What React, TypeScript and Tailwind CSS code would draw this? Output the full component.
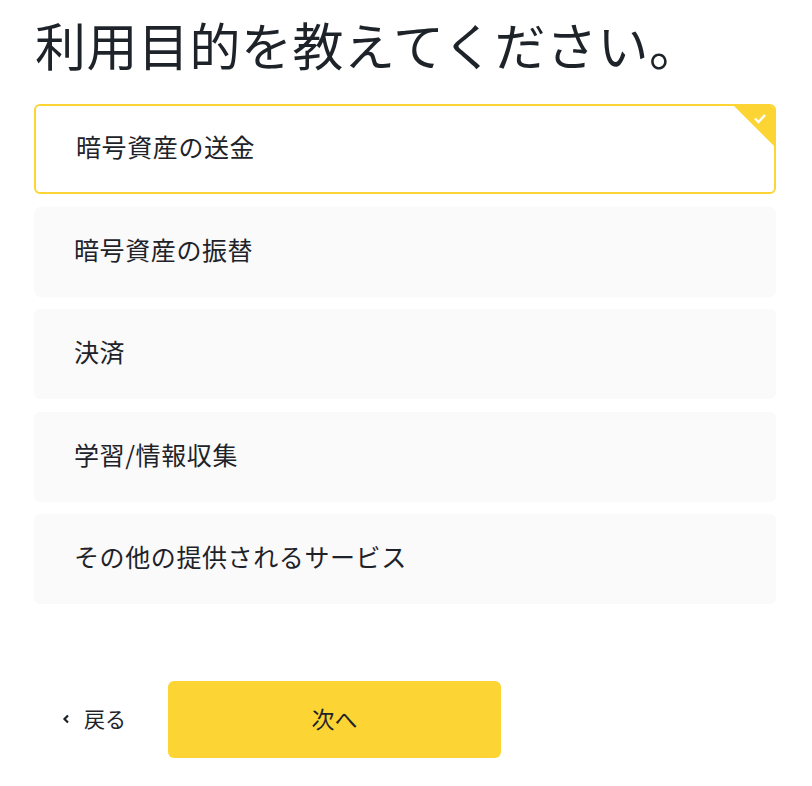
import { useState } from "react";

const options = [
  "暗号資産の送金",
  "暗号資産の振替",
  "決済",
  "学習/情報収集",
  "その他の提供されるサービス",
];

export default function App() {
  const [selected, setSelected] = useState(0);

  return (
    <div
      className="min-h-screen bg-white px-[34px] pt-[12px] text-[#1e2329]"
      style={{ fontFamily: '"Noto Sans CJK JP", "Noto Sans", sans-serif' }}
    >
      <h1 className="ml-[1px] h-[68px] text-[51px] font-normal leading-[64px] tracking-[0.5px]">
        利用目的を教えてください。
      </h1>

      <div className="mt-[24px] flex w-[742px] flex-col gap-[12.5px]">
        {options.map((label, i) => {
          const active = i === selected;
          return (
            <button
              key={label}
              onClick={() => setSelected(i)}
              className={
                active
                  ? "relative flex h-[90px] items-center overflow-hidden rounded-[6px] border-[2.5px] border-[#fcd535] bg-white pb-[4px] pl-[40px] text-left text-[25px] tracking-[0.6px]"
                  : "relative flex h-[90px] items-center overflow-hidden rounded-[6px] border-2 border-transparent bg-[#fafafa] pb-[4px] pl-[38px] text-left text-[25px] tracking-[0.6px]"
              }
            >
              {label}
              {active && (
                <span className="absolute right-0 top-0 h-[40px] w-[40px]">
                  <svg viewBox="0 0 40 40" className="h-full w-full">
                    <polygon points="0,0 40,0 40,40" fill="#fcd535" />
                    <path
                      d="M21 12.5l3.5 3.5 6.5-7"
                      fill="none"
                      stroke="white"
                      strokeWidth="2.4"
                    />
                  </svg>
                </span>
              )}
            </button>
          );
        })}
      </div>

      <div className="mt-[77px] flex items-center">
        <button className="flex w-[134px] items-center gap-[14px] pb-[2px] pl-[28px] text-[21px]">
          <svg viewBox="0 0 8 10" className="h-[10px] w-[8px]">
            <path d="M6 1.5L2.5 5 6 8.5" fill="none" stroke="#1e2329" strokeWidth="2.2" />
          </svg>
          戻る
        </button>
        <button className="flex h-[77px] w-[333px] items-center justify-center rounded-[6px] bg-[#fcd535] pb-[3px] text-[23px]">
          次へ
        </button>
      </div>
    </div>
  );
}
